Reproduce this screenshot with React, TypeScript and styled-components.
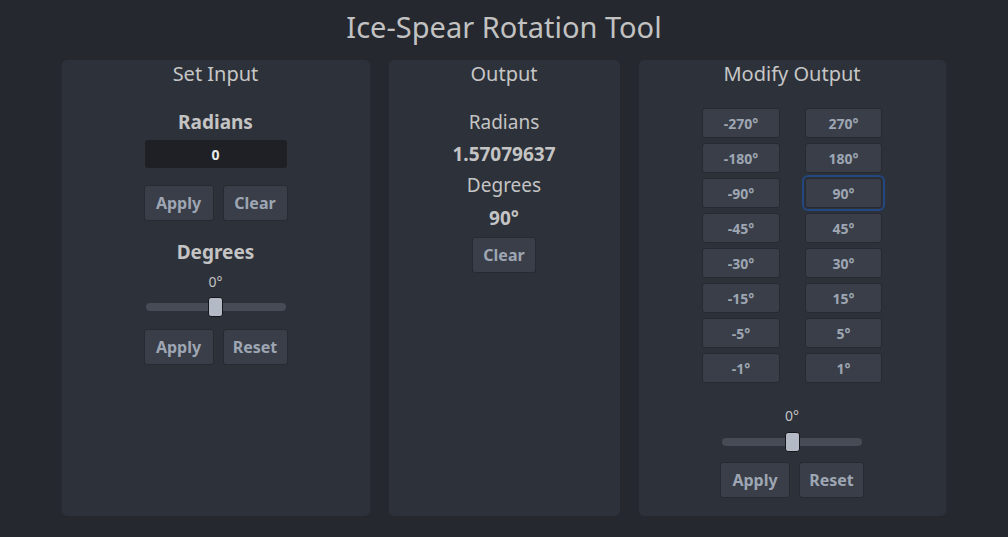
import { useState } from 'react';
import styled, { createGlobalStyle } from 'styled-components';

const GlobalStyle = createGlobalStyle`
  html, body {
    margin: 0;
    padding: 0;
    background-color: #25282e;
    font-family: "Noto Sans", "Open Sans", sans-serif;
  }
`;

const Page = styled.div`
  min-height: 537px;
  display: flex;
  flex-direction: column;
  align-items: center;
`;

const Title = styled.h1`
  margin: 7px 0 13px;
  height: 40px;
  line-height: 40px;
  font-size: 29px;
  font-weight: 400;
  color: #c2c2c2;
`;

const Panels = styled.div`
  display: flex;
  gap: 19px;
  margin-right: 1px;
`;

const Panel = styled.section<{ $width: number }>`
  width: ${(p) => p.$width}px;
  height: 456px;
  background-color: #2d3139;
  border-radius: 5px;
  display: flex;
  flex-direction: column;
  align-items: center;
`;

const PanelTitle = styled.h2`
  margin: 0;
  height: 28px;
  line-height: 28px;
  font-size: 20px;
  font-weight: 400;
  color: #c6c6c6;
`;

const Label = styled.div<{ $bold?: boolean; $mt: number }>`
  margin-top: ${(p) => p.$mt}px;
  height: 24px;
  line-height: 24px;
  font-size: 19px;
  font-weight: ${(p) => (p.$bold ? 700 : 400)};
  color: #c4c4c4;
`;

const Small = styled.div<{ $mt: number }>`
  margin-top: ${(p) => p.$mt}px;
  height: 18px;
  line-height: 18px;
  font-size: 14px;
  color: #c4c4c4;
`;

const NumberInput = styled.input`
  margin-top: 6px;
  width: 142px;
  height: 28px;
  box-sizing: border-box;
  border: none;
  border-radius: 3px;
  background-color: #1e2025;
  color: #e8e8e8;
  font-family: inherit;
  font-size: 14px;
  font-weight: 700;
  text-align: center;

  &:focus {
    outline: none;
  }
`;

const ButtonRow = styled.div<{ $mt: number }>`
  margin-top: ${(p) => p.$mt}px;
  display: flex;
  gap: 9px;
`;

const Button = styled.button<{ $width: number }>`
  width: ${(p) => p.$width}px;
  height: 36px;
  padding: 0;
  border: 1px solid #272a30;
  border-radius: 3px;
  background-color: #393e48;
  color: #9ea6b3;
  font-family: inherit;
  font-size: 16px;
  font-weight: 700;
  cursor: pointer;

  &:hover {
    background-color: #3f4550;
  }
`;

const StepGrid = styled.div`
  margin-top: 20px;
  display: grid;
  grid-template-columns: 78px 77px;
  column-gap: 25px;
  row-gap: 5px;
`;

const StepButton = styled.button<{ $focused?: boolean }>`
  height: 30px;
  padding: 0;
  border: 1px solid #272a30;
  border-radius: 3px;
  background-color: #393e48;
  color: #9ea6b3;
  font-family: inherit;
  font-size: 14px;
  font-weight: 700;
  cursor: pointer;
  outline: ${(p) => (p.$focused ? '2px solid #224781' : 'none')};
  outline-offset: 1px;
`;

const Slider = styled.input<{ $mt: number }>`
  -webkit-appearance: none;
  appearance: none;
  margin: ${(p) => p.$mt}px 0 0;
  width: 140px;
  height: 20px;
  background: transparent;

  &::-webkit-slider-runnable-track {
    height: 8px;
    border-radius: 4px;
    background-color: #464b56;
  }

  &::-webkit-slider-thumb {
    -webkit-appearance: none;
    width: 15px;
    height: 20px;
    margin-top: -6px;
    box-sizing: border-box;
    border: 1px solid #15171b;
    border-radius: 3px;
    background-color: #b3b9c5;
  }

  &:focus {
    outline: none;
  }
`;

const STEPS = [270, 180, 90, 45, 30, 15, 5, 1];

// values are kept as 32-bit floats, like the original tool
const toRad = (deg: number) => Math.fround((deg * Math.PI) / 180);
const fmt = (n: number) => String(Number(n.toFixed(8)));

export default function App() {
  const [radInput, setRadInput] = useState('0');
  const [degInput, setDegInput] = useState(0);
  const [modify, setModify] = useState(0);
  const [output, setOutput] = useState<number | null>(toRad(90));

  const outDeg = output === null ? null : Math.round(((output * 180) / Math.PI) * 1e4) / 1e4;

  const addDegrees = (d: number) => setOutput((o) => Math.fround((o ?? 0) + toRad(d)));

  return (
    <>
      <GlobalStyle />
      <Page>
        <Title>Ice-Spear Rotation Tool</Title>
        <Panels>
          <Panel $width={308}>
            <PanelTitle>Set Input</PanelTitle>
            <Label $bold $mt={22}>Radians</Label>
            <NumberInput value={radInput} onChange={(e) => setRadInput(e.target.value)} />
            <ButtonRow $mt={17}>
              <Button $width={70} onClick={() => setOutput(Math.fround(parseFloat(radInput) || 0))}>Apply</Button>
              <Button $width={65} onClick={() => setRadInput('0')}>Clear</Button>
            </ButtonRow>
            <Label $bold $mt={19}>Degrees</Label>
            <Small $mt={9}>{degInput}°</Small>
            <Slider
              $mt={6}
              type="range"
              min={-360}
              max={360}
              value={degInput}
              onChange={(e) => setDegInput(Number(e.target.value))}
            />
            <ButtonRow $mt={12}>
              <Button $width={70} onClick={() => setOutput(toRad(degInput))}>Apply</Button>
              <Button $width={65} onClick={() => setDegInput(0)}>Reset</Button>
            </ButtonRow>
          </Panel>

          <Panel $width={231}>
            <PanelTitle>Output</PanelTitle>
            <Label $mt={22}>Radians</Label>
            <Label $bold $mt={8}>{output === null ? '' : fmt(output)}</Label>
            <Label $mt={7}>Degrees</Label>
            <Label $bold $mt={9}>{outDeg === null ? '' : `${outDeg}°`}</Label>
            <ButtonRow $mt={7}>
              <Button $width={64} onClick={() => setOutput(null)}>Clear</Button>
            </ButtonRow>
          </Panel>

          <Panel $width={307}>
            <PanelTitle>Modify Output</PanelTitle>
            <StepGrid>
              {STEPS.map((s) => [
                <StepButton key={`n${s}`} onClick={() => addDegrees(-s)}>-{s}°</StepButton>,
                <StepButton key={`p${s}`} $focused={s === 90} onClick={() => addDegrees(s)}>{s}°</StepButton>,
              ])}
            </StepGrid>
            <Small $mt={24}>{modify}°</Small>
            <Slider
              $mt={7}
              type="range"
              min={-360}
              max={360}
              value={modify}
              onChange={(e) => setModify(Number(e.target.value))}
            />
            <ButtonRow $mt={10}>
              <Button $width={70} onClick={() => addDegrees(modify)}>Apply</Button>
              <Button $width={65} onClick={() => setModify(0)}>Reset</Button>
            </ButtonRow>
          </Panel>
        </Panels>
      </Page>
    </>
  );
}
